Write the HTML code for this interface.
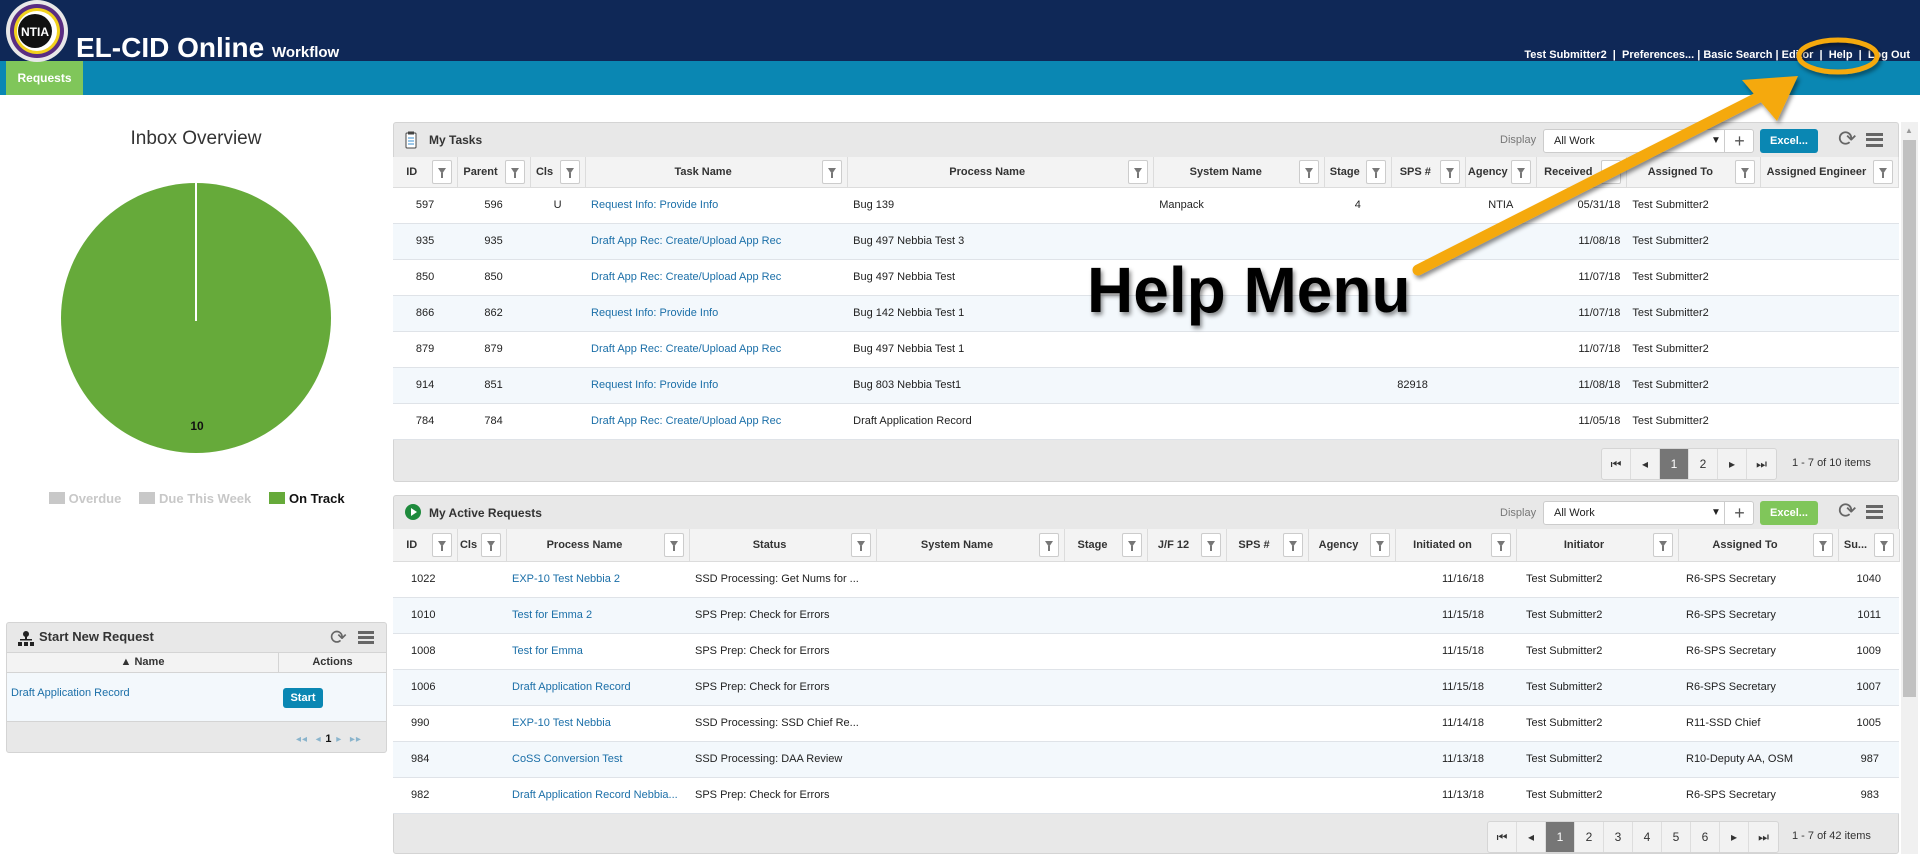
<!DOCTYPE html>
<html><head><meta charset="utf-8">
<style>
*{box-sizing:border-box;margin:0;padding:0}
body{width:1920px;height:856px;overflow:hidden;background:#fff;font-family:"Liberation Sans",Arial,sans-serif;font-size:11px;color:#222;position:relative}
.abs{position:absolute}
#hdr{left:0;top:0;width:1920px;height:61px;background:#0f2857}
#nav{left:0;top:61px;width:1920px;height:34px;background:#0a87b3}
#req{left:6px;top:61px;width:77px;height:34px;background:#80c65a;color:#fff;font-weight:bold;font-size:12px;line-height:34px;text-align:center}
.panel{background:#e8e8e8;border:1px solid #d4d4d4;border-radius:3px}
table{border-collapse:collapse;table-layout:fixed;position:absolute}
th{background:#f3f3f3;font-weight:bold;font-size:11px;color:#333;border-right:1px solid #dcdcdc;border-bottom:1px solid #dcdcdc;position:relative;text-align:center;padding-right:26px;white-space:nowrap;overflow:hidden}
th .f{position:absolute;right:5px;top:50%;margin-top:-12px;width:20px;height:24px;background:#fff;border:1px solid #ccc;border-radius:2px}
th .f:after{content:"";position:absolute;left:5px;top:7px;border-left:4px solid transparent;border-right:4px solid transparent;border-top:6px solid #777}
th .f:before{content:"";position:absolute;left:8px;top:12px;width:2px;height:5px;background:#777}
td{border-bottom:1px solid #dfe3e8;white-space:nowrap;overflow:hidden;padding:0 6px;font-size:11px;color:#222}
tr.alt td{background:#f3f8fc}
tr.r td{background:#fff}
a{color:#1b6fa8;text-decoration:none}
.c{text-align:center}.rt{text-align:right}
.pg{display:flex;border:1px solid #d5d5d5;border-radius:3px;background:#f2f2f2;overflow:hidden}
.pg span{width:29px;height:30px;line-height:30px;text-align:center;border-right:1px solid #ddd;font-size:12px;color:#333}
.pg span.on{background:#767676;color:#fff}
.sel{background:#fff;border:1px solid #ccc;border-radius:3px}
</style></head><body>
<div id="hdr" class="abs"></div>
<div id="nav" class="abs"></div>
<div id="req" class="abs">Requests</div>
<svg class="abs" style="left:4px;top:0" width="66" height="62"><circle cx="33" cy="31" r="31" fill="#e8e8e8"/><circle cx="33" cy="31" r="27" fill="#5a2d82"/><circle cx="33" cy="31" r="23" fill="#f2d21c"/><circle cx="33" cy="31" r="20" fill="#fff"/><circle cx="31" cy="31" r="17" fill="#111"/><text x="31" y="36" font-family="Liberation Sans" font-weight="bold" font-size="12" fill="#fff" text-anchor="middle">NTIA</text></svg>
<div class="abs" style="left:76px;top:32px;color:#fff;font-weight:bold;font-size:28px;line-height:32px">EL-CID Online <span style="font-size:15px">Workflow</span></div>
<div class="abs" style="right:10px;top:49px;color:#fff;font-weight:bold;font-size:11px">Test Submitter2 &nbsp;| &nbsp;Preferences... | Basic Search | Editor &nbsp;| &nbsp;Help &nbsp;| &nbsp;Log Out</div>

<div class="abs" style="left:0;top:128px;width:392px;text-align:center;font-size:19px;color:#333">Inbox Overview</div>
<svg class="abs" style="left:60px;top:182px" width="272" height="272"><circle cx="136" cy="136" r="135" fill="#66aa3a"/><line x1="136" y1="1" x2="136" y2="139" stroke="#fff" stroke-width="2"/><text x="137" y="248" font-family="Liberation Sans" font-weight="bold" font-size="12" text-anchor="middle" fill="#111">10</text></svg>
<div class="abs" style="left:49px;top:491px;font-weight:bold;font-size:13px;color:#c8c8c8;white-space:nowrap">
<span style="display:inline-block;width:16px;height:12px;background:#c8c8c8;vertical-align:-1px"></span> Overdue &nbsp;&nbsp;&nbsp;
<span style="display:inline-block;width:16px;height:12px;background:#c8c8c8;vertical-align:-1px"></span> Due This Week &nbsp;&nbsp;&nbsp;
<span style="display:inline-block;width:16px;height:12px;background:#66aa3a;vertical-align:-1px"></span> <span style="color:#111">On Track</span></div>

<!-- Start New Request -->
<div class="abs panel" style="left:6px;top:622px;width:381px;height:131px"></div>
<svg class="abs" style="left:18px;top:631px" width="16" height="16"><circle cx="8" cy="3" r="3" fill="#222"/><rect x="7" y="5" width="2" height="4" fill="#222"/><rect x="2" y="8" width="12" height="1.5" fill="#222"/><rect x="0" y="11" width="4" height="4" fill="#222"/><rect x="6" y="11" width="4" height="4" fill="#222"/><rect x="12" y="11" width="4" height="4" fill="#222"/></svg>
<div class="abs" style="left:39px;top:629px;font-weight:bold;font-size:13px;color:#333">Start New Request</div>
<div class="abs" style="left:330px;top:625px;font-size:20px;color:#666">⟳</div>
<div class="abs" style="left:358px;top:631px;width:16px;height:13px;border-top:3px solid #666;border-bottom:3px solid #666"><div style="margin-top:2px;height:3px;background:#666"></div></div>
<div class="abs" style="left:7px;top:652px;width:379px;height:21px;background:#f3f3f3;border-top:1px solid #d4d4d4;border-bottom:1px solid #d4d4d4"></div>
<div class="abs" style="left:7px;top:656px;width:271px;text-align:center;font-weight:bold;color:#333">▲ Name</div>
<div class="abs" style="left:278px;top:652px;width:1px;height:21px;background:#d4d4d4"></div>
<div class="abs" style="left:279px;top:656px;width:107px;text-align:center;font-weight:bold;color:#333">Actions</div>
<div class="abs" style="left:7px;top:673px;width:379px;height:49px;background:#f3f8fc;border-bottom:1px solid #d4d4d4"></div>
<div class="abs" style="left:11px;top:687px"><a>Draft Application Record</a></div>
<div class="abs" style="left:283px;top:688px;width:40px;height:20px;background:#0a87b3;border-radius:3px;color:#fff;font-weight:bold;text-align:center;line-height:20px">Start</div>
<div class="abs" style="left:296px;top:733px;font-size:10px;color:#8ab4cc;letter-spacing:1px">◂◂ &nbsp;◂ <b style="color:#111;font-size:11px">1</b> ▸ &nbsp;▸▸</div>

<!-- My Tasks -->
<div class="abs panel" style="left:393px;top:122px;width:1506px;height:360px"></div>
<svg class="abs" style="left:405px;top:131px" width="12" height="18"><rect x="1" y="2" width="10" height="15" rx="1" fill="#fff" stroke="#444"/><rect x="3" y="0.5" width="6" height="3" fill="#444"/><g stroke="#3a8fd0"><line x1="3" y1="7" x2="9" y2="7"/><line x1="3" y1="10" x2="9" y2="10"/><line x1="3" y1="13" x2="9" y2="13"/></g></svg>
<div class="abs" style="left:429px;top:133px;font-weight:bold;font-size:12px;color:#333">My Tasks</div>
<div class="abs" style="left:1500px;top:134px;color:#777">Display</div>
<div class="abs sel" style="left:1543px;top:129px;width:211px;height:24px"><span style="position:absolute;left:10px;top:5px">All Work</span><span style="position:absolute;left:167px;top:5px;font-size:10px">▼</span><span style="position:absolute;left:180px;top:0;width:30px;height:22px;border-left:1px solid #ccc;text-align:center;font-size:18px;line-height:22px;color:#555">+</span></div>
<div class="abs" style="left:1760px;top:129px;width:58px;height:24px;background:#0a87b3;border-radius:3px;color:#fff;font-weight:bold;text-align:center;line-height:24px">Excel...</div>
<div class="abs" style="left:1838px;top:126px;font-size:22px;color:#666">⟳</div>
<div class="abs" style="left:1866px;top:133px;width:17px;height:14px;border-top:3px solid #666;border-bottom:3px solid #666"><div style="margin-top:2px;height:3px;background:#666"></div></div>

<table style="left:393px;top:157px;width:1506px">
<colgroup><col style="width:64px"><col style="width:73px"><col style="width:55px"><col style="width:262px"><col style="width:306px"><col style="width:171px"><col style="width:67px"><col style="width:74px"><col style="width:71px"><col style="width:90px"><col style="width:134px"><col style="width:138px"></colgroup>
<tr style="height:30px"><th>ID<i class="f"></i></th><th>Parent<i class="f"></i></th><th>Cls<i class="f"></i></th><th>Task Name<i class="f"></i></th><th>Process Name<i class="f"></i></th><th>System Name<i class="f"></i></th><th>Stage<i class="f"></i></th><th>SPS #<i class="f"></i></th><th>Agency<i class="f"></i></th><th>Received<i class="f"></i></th><th>Assigned To<i class="f"></i></th><th>Assigned Engineer<i class="f"></i></th></tr>
<tr class="r" style="height:36px"><td class="c">597</td><td class="c">596</td><td class="c">U</td><td><a>Request Info: Provide Info</a></td><td>Bug 139</td><td>Manpack</td><td class="c">4</td><td></td><td class="c">NTIA</td><td class="rt">05/31/18</td><td>Test Submitter2</td><td></td></tr>
<tr class="alt" style="height:36px"><td class="c">935</td><td class="c">935</td><td></td><td><a>Draft App Rec: Create/Upload App Rec</a></td><td>Bug 497 Nebbia Test 3</td><td></td><td></td><td></td><td></td><td class="rt">11/08/18</td><td>Test Submitter2</td><td></td></tr>
<tr class="r" style="height:36px"><td class="c">850</td><td class="c">850</td><td></td><td><a>Draft App Rec: Create/Upload App Rec</a></td><td>Bug 497 Nebbia Test</td><td></td><td></td><td></td><td></td><td class="rt">11/07/18</td><td>Test Submitter2</td><td></td></tr>
<tr class="alt" style="height:36px"><td class="c">866</td><td class="c">862</td><td></td><td><a>Request Info: Provide Info</a></td><td>Bug 142 Nebbia Test 1</td><td></td><td></td><td></td><td></td><td class="rt">11/07/18</td><td>Test Submitter2</td><td></td></tr>
<tr class="r" style="height:36px"><td class="c">879</td><td class="c">879</td><td></td><td><a>Draft App Rec: Create/Upload App Rec</a></td><td>Bug 497 Nebbia Test 1</td><td></td><td></td><td></td><td></td><td class="rt">11/07/18</td><td>Test Submitter2</td><td></td></tr>
<tr class="alt" style="height:36px"><td class="c">914</td><td class="c">851</td><td></td><td><a>Request Info: Provide Info</a></td><td>Bug 803 Nebbia Test1</td><td></td><td></td><td>82918</td><td></td><td class="rt">11/08/18</td><td>Test Submitter2</td><td></td></tr>
<tr class="r" style="height:36px"><td class="c">784</td><td class="c">784</td><td></td><td><a>Draft App Rec: Create/Upload App Rec</a></td><td>Draft Application Record</td><td></td><td></td><td></td><td></td><td class="rt">11/05/18</td><td>Test Submitter2</td><td></td></tr>
</table>
<div class="abs pg" style="left:1601px;top:448px"><span>⏮</span><span>◂</span><span class="on">1</span><span>2</span><span>▸</span><span style="border:0">⏭</span></div>
<div class="abs" style="left:1792px;top:457px;color:#333">1 - 7 of 10 items</div>

<!-- My Active Requests -->
<div class="abs panel" style="left:393px;top:495px;width:1506px;height:359px"></div>
<svg class="abs" style="left:405px;top:504px" width="16" height="16"><circle cx="8" cy="8" r="8" fill="#1e8a3c"/><path d="M6 4 L12 8 L6 12Z" fill="#fff"/></svg>
<div class="abs" style="left:429px;top:506px;font-weight:bold;font-size:12px;color:#333">My Active Requests</div>
<div class="abs" style="left:1500px;top:507px;color:#777">Display</div>
<div class="abs sel" style="left:1543px;top:501px;width:211px;height:24px"><span style="position:absolute;left:10px;top:5px">All Work</span><span style="position:absolute;left:167px;top:5px;font-size:10px">▼</span><span style="position:absolute;left:180px;top:0;width:30px;height:22px;border-left:1px solid #ccc;text-align:center;font-size:18px;line-height:22px;color:#555">+</span></div>
<div class="abs" style="left:1760px;top:501px;width:58px;height:24px;background:#80c65a;border-radius:3px;color:#fff;font-weight:bold;text-align:center;line-height:24px">Excel...</div>
<div class="abs" style="left:1838px;top:498px;font-size:22px;color:#666">⟳</div>
<div class="abs" style="left:1866px;top:505px;width:17px;height:14px;border-top:3px solid #666;border-bottom:3px solid #666"><div style="margin-top:2px;height:3px;background:#666"></div></div>

<table style="left:393px;top:529px;width:1506px">
<colgroup><col style="width:64px"><col style="width:49px"><col style="width:183px"><col style="width:187px"><col style="width:188px"><col style="width:83px"><col style="width:79px"><col style="width:82px"><col style="width:87px"><col style="width:121px"><col style="width:162px"><col style="width:160px"><col style="width:61px"></colgroup>
<tr style="height:32px"><th>ID<i class="f"></i></th><th>Cls<i class="f"></i></th><th>Process Name<i class="f"></i></th><th>Status<i class="f"></i></th><th>System Name<i class="f"></i></th><th>Stage<i class="f"></i></th><th>J/F 12<i class="f"></i></th><th>SPS #<i class="f"></i></th><th>Agency<i class="f"></i></th><th>Initiated on<i class="f"></i></th><th>Initiator<i class="f"></i></th><th>Assigned To<i class="f"></i></th><th>Su...<i class="f"></i></th></tr>
<tr class="r" style="height:36px"><td style="padding-left:18px">1022</td><td></td><td><a>EXP-10 Test Nebbia 2</a></td><td>SSD Processing: Get Nums for ...</td><td></td><td></td><td></td><td></td><td></td><td class="rt" style="padding-right:32px">11/16/18</td><td style="padding-left:10px">Test Submitter2</td><td style="padding-left:8px">R6-SPS Secretary</td><td class="rt" style="padding-right:18px">1040</td></tr>
<tr class="alt" style="height:36px"><td style="padding-left:18px">1010</td><td></td><td><a>Test for Emma 2</a></td><td>SPS Prep: Check for Errors</td><td></td><td></td><td></td><td></td><td></td><td class="rt" style="padding-right:32px">11/15/18</td><td style="padding-left:10px">Test Submitter2</td><td style="padding-left:8px">R6-SPS Secretary</td><td class="rt" style="padding-right:18px">1011</td></tr>
<tr class="r" style="height:36px"><td style="padding-left:18px">1008</td><td></td><td><a>Test for Emma</a></td><td>SPS Prep: Check for Errors</td><td></td><td></td><td></td><td></td><td></td><td class="rt" style="padding-right:32px">11/15/18</td><td style="padding-left:10px">Test Submitter2</td><td style="padding-left:8px">R6-SPS Secretary</td><td class="rt" style="padding-right:18px">1009</td></tr>
<tr class="alt" style="height:36px"><td style="padding-left:18px">1006</td><td></td><td><a>Draft Application Record</a></td><td>SPS Prep: Check for Errors</td><td></td><td></td><td></td><td></td><td></td><td class="rt" style="padding-right:32px">11/15/18</td><td style="padding-left:10px">Test Submitter2</td><td style="padding-left:8px">R6-SPS Secretary</td><td class="rt" style="padding-right:18px">1007</td></tr>
<tr class="r" style="height:36px"><td style="padding-left:18px">990</td><td></td><td><a>EXP-10 Test Nebbia</a></td><td>SSD Processing: SSD Chief Re...</td><td></td><td></td><td></td><td></td><td></td><td class="rt" style="padding-right:32px">11/14/18</td><td style="padding-left:10px">Test Submitter2</td><td style="padding-left:8px">R11-SSD Chief</td><td class="rt" style="padding-right:18px">1005</td></tr>
<tr class="alt" style="height:36px"><td style="padding-left:18px">984</td><td></td><td><a>CoSS Conversion Test</a></td><td>SSD Processing: DAA Review</td><td></td><td></td><td></td><td></td><td></td><td class="rt" style="padding-right:32px">11/13/18</td><td style="padding-left:10px">Test Submitter2</td><td style="padding-left:8px">R10-Deputy AA, OSM</td><td class="rt" style="padding-right:20px">987</td></tr>
<tr class="r" style="height:36px"><td style="padding-left:18px">982</td><td></td><td><a>Draft Application Record Nebbia...</a></td><td>SPS Prep: Check for Errors</td><td></td><td></td><td></td><td></td><td></td><td class="rt" style="padding-right:32px">11/13/18</td><td style="padding-left:10px">Test Submitter2</td><td style="padding-left:8px">R6-SPS Secretary</td><td class="rt" style="padding-right:20px">983</td></tr>
</table>
<div class="abs pg" style="left:1487px;top:821px"><span>⏮</span><span>◂</span><span class="on">1</span><span>2</span><span>3</span><span>4</span><span>5</span><span>6</span><span>▸</span><span style="border:0">⏭</span></div>
<div class="abs" style="left:1792px;top:830px;color:#333">1 - 7 of 42 items</div>

<!-- scrollbar -->
<div class="abs" style="left:1901px;top:122px;width:17px;height:732px;background:#f0f0f0"></div>
<div class="abs" style="left:1903px;top:140px;width:13px;height:557px;background:#c1c1c1"></div>
<div class="abs" style="left:1905px;top:126px;font-size:8px;color:#999">▲</div>

<!-- annotation -->
<svg class="abs" style="left:0;top:0" width="1920" height="856">
<defs><filter id="sh"><feDropShadow dx="2" dy="3" stdDeviation="2" flood-opacity="0.45"/></filter></defs>
<g filter="url(#sh)">
<line x1="1418" y1="270" x2="1765" y2="94" stroke="#f5a90a" stroke-width="11" stroke-linecap="round"/>
<path d="M1798 76 L1742 80 L1777 121 Z" fill="#f5a90a"/>
<ellipse cx="1838" cy="56" rx="39" ry="16" fill="none" stroke="#f5a90a" stroke-width="5"/>
<text x="1087" y="312" font-family="Liberation Sans" font-weight="bold" font-size="64" fill="#000">Help Menu</text>
</g></svg>
</body></html>
